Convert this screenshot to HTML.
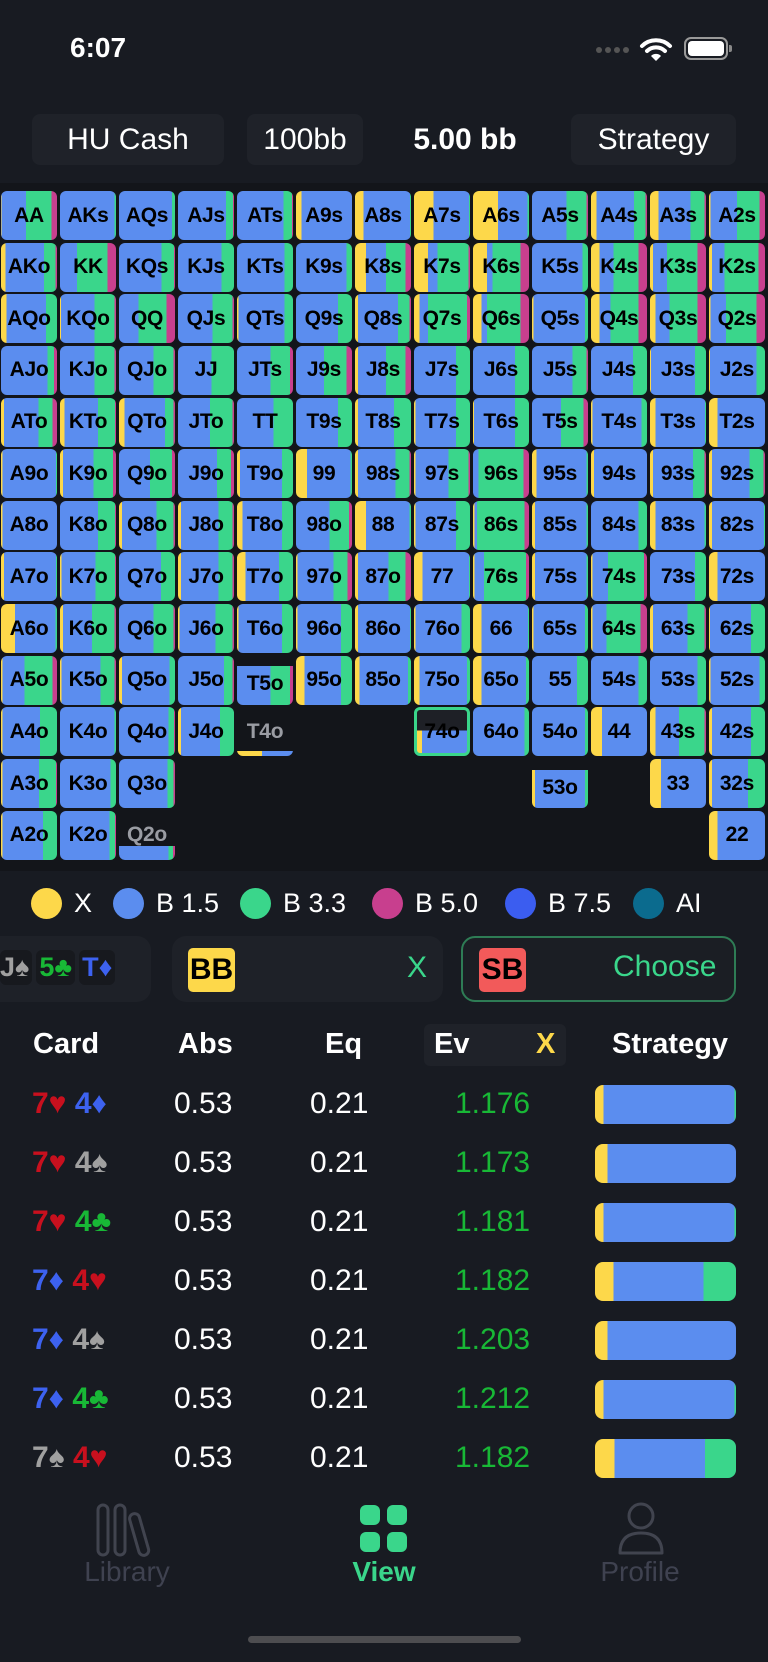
<!DOCTYPE html>
<html><head><meta charset="utf-8"><style>
*{box-sizing:border-box;margin:0;padding:0}
body{width:768px;height:1662px;background:#181b22;font-family:"Liberation Sans",sans-serif;color:#fff;position:relative;overflow:hidden}
.abs{position:absolute}
.time{left:70px;top:32px;font-size:28px;font-weight:bold}
.pill{position:absolute;top:114px;height:51px;background:#1f2229;border-radius:8px;font-size:30px;display:flex;align-items:center;justify-content:center}
.gridbg{position:absolute;left:0;top:183px;width:768px;height:688px;background:#13151a}
.grid{position:absolute;left:1px;top:191px;display:grid;grid-template-columns:repeat(13,56px);grid-auto-rows:49px;column-gap:3px;row-gap:2.65px}
.c{--y:0;--g:0;--p:0;border-radius:6px;position:relative;overflow:hidden;color:#000;font-weight:bold;font-size:21px;letter-spacing:-0.3px;display:flex;align-items:center;justify-content:center;
background:linear-gradient(90deg,#fdd84a 0 calc(var(--y)*1%),#5b8def 0 calc((100 - var(--g) - var(--p))*1%),#3ad68b 0 calc((100 - var(--p))*1%),#c83f8e 0)}
.e{background:none}
.g{background:none;color:#9a9ca3}
.leg{position:absolute;top:888px;height:31px;display:flex;align-items:center;font-size:27px}
.dot{width:31px;height:31px;border-radius:50%;margin-right:12px}
.box{position:absolute;top:936px;height:66px;border-radius:14px;background:#1e2128}
.badge{position:absolute;top:12px;height:44px;border-radius:5px;color:#000;font-weight:bold;font-size:30px;display:flex;align-items:center;justify-content:center}
.th{position:absolute;top:1028px;font-size:29px;font-weight:bold}
.row{position:absolute;left:0;width:768px;height:40px;font-size:30px}
.row span{position:absolute;top:2px}
.bar{position:absolute;left:595px;width:141px;height:39px;border-radius:8px;top:0}
.red{color:#c8101e}.blu{color:#3d62f0}.gry{color:#a0a0a0}.grn{color:#18b836}
.tab{position:absolute;top:1556px;font-size:28px;font-weight:bold;color:#3f4250;text-align:center;width:160px}
</style></head><body>
<div class="abs time">6:07</div>
<div class="abs" style="left:596px;top:47px;display:flex;gap:3px"><i style="width:6px;height:6px;border-radius:3px;background:#555"></i><i style="width:6px;height:6px;border-radius:3px;background:#555"></i><i style="width:6px;height:6px;border-radius:3px;background:#555"></i><i style="width:6px;height:6px;border-radius:3px;background:#555"></i></div>
<svg class="abs" style="left:639px;top:36px" width="34" height="26" viewBox="0 0 34 26"><path d="M3 10 A20 20 0 0 1 31 10" stroke="#fff" stroke-width="4" fill="none" stroke-linecap="round"/><path d="M8 15 A13 13 0 0 1 26 15" stroke="#fff" stroke-width="4" fill="none" stroke-linecap="round"/><path d="M12 20 L17 25 L22 20 A7 7 0 0 0 12 20Z" fill="#fff"/></svg>
<div class="abs" style="left:684px;top:37px;width:44px;height:23px;border:2px solid #999;border-radius:7px;padding:2px"><div style="width:100%;height:100%;background:#fff;border-radius:4px"></div></div>
<div class="abs" style="left:729px;top:45px;width:3px;height:7px;background:#888;border-radius:0 2px 2px 0"></div>

<div class="pill" style="left:32px;width:192px">HU Cash</div>
<div class="pill" style="left:247px;width:116px">100bb</div>
<div class="pill" style="left:391px;width:148px;background:none;font-weight:bold">5.00 bb</div>
<div class="pill" style="left:571px;width:165px">Strategy</div>

<div class="gridbg"></div>
<div class="grid">
<div class="c" style="--y:1;--g:45;--p:10">AA</div><div class="c" style="--g:3">AKs</div><div class="c" style="--g:5">AQs</div><div class="c" style="--g:12;--p:2">AJs</div><div class="c" style="--g:15;--p:2">ATs</div><div class="c" style="--y:10">A9s</div><div class="c" style="--y:15;--g:2">A8s</div><div class="c" style="--y:35;--g:2">A7s</div><div class="c" style="--y:45;--g:3">A6s</div><div class="c" style="--g:35;--p:3">A5s</div><div class="c" style="--y:10;--g:20;--p:3">A4s</div><div class="c" style="--y:15;--g:25;--p:3">A3s</div><div class="c" style="--y:3;--g:40;--p:10">A2s</div>
<div class="c" style="--y:8;--g:20;--p:3">AKo</div><div class="c" style="--g:55;--p:15">KK</div><div class="c" style="--g:22;--p:2">KQs</div><div class="c" style="--g:22">KJs</div><div class="c" style="--g:15">KTs</div><div class="c" style="--g:10">K9s</div><div class="c" style="--y:20;--g:35;--p:10">K8s</div><div class="c" style="--y:25;--g:55;--p:3">K7s</div><div class="c" style="--y:25;--g:50;--p:15">K6s</div><div class="c" style="--g:10">K5s</div><div class="c" style="--y:15;--g:45;--p:15">K4s</div><div class="c" style="--y:5;--g:55;--p:15">K3s</div><div class="c" style="--y:5;--g:60;--p:12">K2s</div>
<div class="c" style="--y:10;--g:20">AQo</div><div class="c" style="--y:2;--g:35;--p:3">KQo</div><div class="c" style="--g:50;--p:15">QQ</div><div class="c" style="--g:35;--p:3">QJs</div><div class="c" style="--y:3;--g:15">QTs</div><div class="c" style="--g:25">Q9s</div><div class="c" style="--y:5;--g:20;--p:3">Q8s</div><div class="c" style="--y:10;--g:70;--p:5">Q7s</div><div class="c" style="--y:15;--g:60;--p:15">Q6s</div><div class="c" style="--y:3;--g:5">Q5s</div><div class="c" style="--y:15;--g:50;--p:15">Q4s</div><div class="c" style="--y:10;--g:50;--p:15">Q3s</div><div class="c" style="--y:3;--g:55;--p:15">Q2s</div>
<div class="c" style="--g:12;--p:5">AJo</div><div class="c" style="--g:35;--p:3">KJo</div><div class="c" style="--g:35;--p:3">QJo</div><div class="c" style="--g:40">JJ</div><div class="c" style="--g:35;--p:5">JTs</div><div class="c" style="--g:40;--p:10">J9s</div><div class="c" style="--y:5;--g:35;--p:10">J8s</div><div class="c" style="--g:25">J7s</div><div class="c" style="--g:25">J6s</div><div class="c" style="--g:25;--p:3">J5s</div><div class="c" style="--g:25">J4s</div><div class="c" style="--y:2;--g:20">J3s</div><div class="c" style="--y:2;--g:15">J2s</div>
<div class="c" style="--y:5;--g:25;--p:8">ATo</div><div class="c" style="--y:8;--g:30;--p:2">KTo</div><div class="c" style="--y:10;--g:15;--p:3">QTo</div><div class="c" style="--g:40;--p:3">JTo</div><div class="c" style="--g:35">TT</div><div class="c" style="--g:25">T9s</div><div class="c" style="--y:5;--g:30">T8s</div><div class="c" style="--y:3;--g:25">T7s</div><div class="c" style="--y:2;--g:25">T6s</div><div class="c" style="--g:40;--p:8">T5s</div><div class="c" style="--y:3;--g:10">T4s</div><div class="c" style="--y:10;--g:2">T3s</div><div class="c" style="--y:15">T2s</div>
<div class="c" style="--y:3;--g:2">A9o</div><div class="c" style="--y:5;--g:35;--p:5">K9o</div><div class="c" style="--g:40;--p:5">Q9o</div><div class="c" style="--g:25;--p:5">J9o</div><div class="c" style="--y:5;--g:20">T9o</div><div class="c" style="--y:20;--g:3">99</div><div class="c" style="--y:5;--g:25;--p:3">98s</div><div class="c" style="--y:3;--g:35;--p:3">97s</div><div class="c" style="--g:80;--p:10">96s</div><div class="c" style="--y:8;--g:3">95s</div><div class="c" style="--y:5">94s</div><div class="c" style="--y:5;--g:20;--p:3">93s</div><div class="c" style="--y:5;--g:25;--p:3">92s</div>
<div class="c" style="--y:3">A8o</div><div class="c" style="--g:30;--p:2">K8o</div><div class="c" style="--y:5;--g:30;--p:3">Q8o</div><div class="c" style="--y:5;--g:25;--p:3">J8o</div><div class="c" style="--y:10;--g:20">T8o</div><div class="c" style="--g:35;--p:5">98o</div><div class="c" style="--y:20;--g:3">88</div><div class="c" style="--y:3;--g:25">87s</div><div class="c" style="--y:3;--g:85;--p:8">86s</div><div class="c" style="--y:5;--g:3">85s</div><div class="c" style="--g:15">84s</div><div class="c" style="--y:10;--g:3">83s</div><div class="c" style="--y:5;--g:2">82s</div>
<div class="c" style="--y:5;--g:2">A7o</div><div class="c" style="--y:3;--g:35;--p:2">K7o</div><div class="c" style="--g:25">Q7o</div><div class="c" style="--y:5;--g:25;--p:3">J7o</div><div class="c" style="--y:15;--g:25">T7o</div><div class="c" style="--y:3;--g:25;--p:8">97o</div><div class="c" style="--y:5;--g:30;--p:10">87o</div><div class="c" style="--y:15;--g:2">77</div><div class="c" style="--y:3;--g:75;--p:5">76s</div><div class="c" style="--y:5;--g:3">75s</div><div class="c" style="--y:3;--g:65;--p:5">74s</div><div class="c" style="--g:20">73s</div><div class="c" style="--y:15">72s</div>
<div class="c" style="--y:25;--g:3">A6o</div><div class="c" style="--y:5;--g:40;--p:3">K6o</div><div class="c" style="--g:35;--p:3">Q6o</div><div class="c" style="--y:3;--g:30;--p:3">J6o</div><div class="c" style="--y:3;--g:20">T6o</div><div class="c" style="--y:3;--g:20">96o</div><div class="c" style="--y:5;--g:2">86o</div><div class="c" style="--y:3;--g:15">76o</div><div class="c" style="--y:15;--g:2">66</div><div class="c" style="--y:3;--g:5">65s</div><div class="c" style="--y:3;--g:60;--p:12">64s</div><div class="c" style="--y:5;--g:30;--p:3">63s</div><div class="c" style="--y:2;--g:25">62s</div>
<div class="c" style="--y:3;--g:50;--p:8">A5o</div><div class="c" style="--y:3;--g:25;--p:3">K5o</div><div class="c" style="--y:5;--g:10">Q5o</div><div class="c" style="--g:15;--p:3">J5o</div><div class="c" style="--g:35;--p:5;background-size:100% 80%;background-position:bottom;background-repeat:no-repeat;padding-top:8px">T5o</div><div class="c" style="--y:15;--g:20">95o</div><div class="c" style="--y:8;--g:5">85o</div><div class="c" style="--y:10;--g:5">75o</div><div class="c" style="--y:15;--g:5">65o</div><div class="c" style="--g:20">55</div><div class="c" style="--g:15">54s</div><div class="c" style="--g:15">53s</div><div class="c" style="--y:3;--g:10">52s</div>
<div class="c" style="--y:3;--g:30">A4o</div><div class="c" style="--g:3">K4o</div><div class="c" style="--g:10;--p:2">Q4o</div><div class="c" style="--y:5;--g:25">J4o</div><div class="c g">T4o<div class="abs" style="left:0;right:0;bottom:0;height:5px;background:linear-gradient(90deg,#fdd84a 0 45%,#5b8def 0)"></div></div><div class="c e"></div><div class="c e"></div><div class="c e" style="border:3px solid #3ad68b;background:linear-gradient(#1e2026 0 48%,transparent 0),linear-gradient(90deg,#fdd84a 0 10%,#5b8def 0)">74o</div><div class="c" style="--g:8">64o</div><div class="c" style="--g:5">54o</div><div class="c" style="--y:20">44</div><div class="c" style="--y:10;--g:45;--p:3">43s</div><div class="c" style="--y:5;--g:25">42s</div>
<div class="c" style="--y:3;--g:30;--p:2">A3o</div><div class="c" style="--g:10">K3o</div><div class="c" style="--g:10;--p:3">Q3o</div><div class="c e"></div><div class="c e"></div><div class="c e"></div><div class="c e"></div><div class="c e"></div><div class="c e"></div><div class="c" style="--y:5;--g:5;background-size:100% 78%;background-position:bottom;background-repeat:no-repeat;padding-top:8px">53o</div><div class="c e"></div><div class="c" style="--y:20">33</div><div class="c" style="--y:5;--g:30">32s</div>
<div class="c" style="--y:3;--g:25">A2o</div><div class="c" style="--g:10;--p:2">K2o</div><div class="c g">Q2o<div class="abs" style="left:0;right:0;bottom:0;height:14px;background:linear-gradient(90deg,#5b8def 0 88%,#3ad68b 0 96%,#c83f8e 0);border-radius:0 0 6px 6px"></div></div><div class="c e"></div><div class="c e"></div><div class="c e"></div><div class="c e"></div><div class="c e"></div><div class="c e"></div><div class="c e"></div><div class="c e"></div><div class="c e"></div><div class="c" style="--y:15">22</div>
</div>

<div class="leg" style="left:31px"><div class="dot" style="background:#fdd84a"></div>X</div>
<div class="leg" style="left:113px"><div class="dot" style="background:#5b8def"></div>B 1.5</div>
<div class="leg" style="left:240px"><div class="dot" style="background:#3ad68b"></div>B 3.3</div>
<div class="leg" style="left:372px"><div class="dot" style="background:#c83f8e"></div>B 5.0</div>
<div class="leg" style="left:505px"><div class="dot" style="background:#3b5df0"></div>B 7.5</div>
<div class="leg" style="left:633px"><div class="dot" style="background:#0b6b8e"></div>AI</div>

<div class="box" style="left:-20px;width:171px"></div>
<div class="abs" style="left:0;top:950px;font-size:27px;font-weight:bold;display:flex;gap:4px">
<span style="background:#17191e;border-radius:6px;padding:2px 3px 2px 0;color:#a0a0a0">J♠</span><span style="background:#17191e;border-radius:6px;padding:2px 3px;color:#18b836">5♣</span><span style="background:#17191e;border-radius:6px;padding:2px 3px;color:#3d62f0">T♦</span></div>
<div class="box" style="left:172px;width:271px"><div class="badge" style="left:16px;width:47px;background:#fdd84a">BB</div><div class="abs" style="left:235px;top:15px;font-size:30px;color:#3ad68b">X</div></div>
<div class="box" style="left:461px;width:275px;border:2px solid #2e7c55;background:#1b1e24"><div class="badge" style="left:16px;top:10px;width:47px;background:#f25a5a">SB</div><div class="abs" style="left:150px;top:12px;font-size:30px;color:#3ad68b">Choose</div></div>

<div class="th" style="left:33px">Card</div>
<div class="th" style="left:178px">Abs</div>
<div class="th" style="left:325px">Eq</div>
<div class="abs" style="left:424px;top:1024px;width:142px;height:42px;background:#1f2229;border-radius:6px"></div>
<div class="th" style="left:434px">Ev</div>
<div class="th" style="left:536px;color:#fdd84a">X</div>
<div class="th" style="left:612px">Strategy</div>

<div class="row" style="top:1085px"><span style="left:32px"><b class="red">7♥</b> <b class="blu">4♦</b></span><span style="left:174px">0.53</span><span style="left:310px">0.21</span><span class="grn" style="left:455px">1.176</span><div class="bar" style="background:linear-gradient(90deg,#fdd84a 0 6%,#5b8def 0 99%,#3ad68b 0)"></div></div>
<div class="row" style="top:1144px"><span style="left:32px"><b class="red">7♥</b> <b class="gry">4♠</b></span><span style="left:174px">0.53</span><span style="left:310px">0.21</span><span class="grn" style="left:455px">1.173</span><div class="bar" style="background:linear-gradient(90deg,#fdd84a 0 9%,#5b8def 0)"></div></div>
<div class="row" style="top:1203px"><span style="left:32px"><b class="red">7♥</b> <b class="grn">4♣</b></span><span style="left:174px">0.53</span><span style="left:310px">0.21</span><span class="grn" style="left:455px">1.181</span><div class="bar" style="background:linear-gradient(90deg,#fdd84a 0 6%,#5b8def 0 99%,#3ad68b 0)"></div></div>
<div class="row" style="top:1262px"><span style="left:32px"><b class="blu">7♦</b> <b class="red">4♥</b></span><span style="left:174px">0.53</span><span style="left:310px">0.21</span><span class="grn" style="left:455px">1.182</span><div class="bar" style="background:linear-gradient(90deg,#fdd84a 0 13%,#5b8def 0 77%,#3ad68b 0)"></div></div>
<div class="row" style="top:1321px"><span style="left:32px"><b class="blu">7♦</b> <b class="gry">4♠</b></span><span style="left:174px">0.53</span><span style="left:310px">0.21</span><span class="grn" style="left:455px">1.203</span><div class="bar" style="background:linear-gradient(90deg,#fdd84a 0 9%,#5b8def 0)"></div></div>
<div class="row" style="top:1380px"><span style="left:32px"><b class="blu">7♦</b> <b class="grn">4♣</b></span><span style="left:174px">0.53</span><span style="left:310px">0.21</span><span class="grn" style="left:455px">1.212</span><div class="bar" style="background:linear-gradient(90deg,#fdd84a 0 6%,#5b8def 0 99%,#3ad68b 0)"></div></div>
<div class="row" style="top:1439px"><span style="left:32px"><b class="gry">7♠</b> <b class="red">4♥</b></span><span style="left:174px">0.53</span><span style="left:310px">0.21</span><span class="grn" style="left:455px">1.182</span><div class="bar" style="background:linear-gradient(90deg,#fdd84a 0 14%,#5b8def 0 78%,#3ad68b 0)"></div></div>

<svg class="abs" style="left:96px;top:1503px" width="64" height="54" viewBox="0 0 64 54"><rect x="2" y="2" width="10" height="50" rx="5" fill="none" stroke="#41444f" stroke-width="3"/><rect x="19" y="2" width="10" height="50" rx="5" fill="none" stroke="#41444f" stroke-width="3"/><rect x="38" y="10" width="10" height="43" rx="5" transform="rotate(-16 43 31)" fill="none" stroke="#41444f" stroke-width="3"/></svg>
<div class="tab" style="left:47px;font-weight:normal">Library</div>
<svg class="abs" style="left:360px;top:1505px" width="48" height="48" viewBox="0 0 48 48"><rect x="0" y="0" width="20" height="20" rx="6" fill="#3ad68b"/><rect x="27" y="0" width="20" height="20" rx="6" fill="#3ad68b"/><rect x="0" y="27" width="20" height="20" rx="6" fill="#3ad68b"/><rect x="27" y="27" width="20" height="20" rx="6" fill="#3ad68b"/></svg>
<div class="tab" style="left:304px;color:#3ad68b">View</div>
<svg class="abs" style="left:617px;top:1502px" width="48" height="54" viewBox="0 0 48 54"><circle cx="24" cy="14" r="12" fill="none" stroke="#41444f" stroke-width="3"/><path d="M3 51 Q3 31 24 31 Q45 31 45 51 Z" fill="none" stroke="#41444f" stroke-width="3" stroke-linejoin="round"/></svg>
<div class="tab" style="left:560px;font-weight:normal">Profile</div>
<div class="abs" style="left:248px;top:1636px;width:273px;height:7px;border-radius:4px;background:#4d4d50"></div>
</body></html>
